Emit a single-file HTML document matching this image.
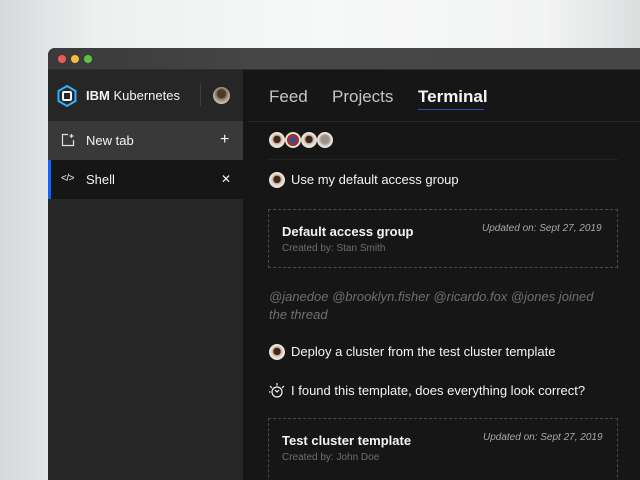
<!DOCTYPE html>
<html><head><style>
*{margin:0;padding:0;box-sizing:border-box}
body{width:640px;height:480px;overflow:hidden;background:linear-gradient(90deg,#d6d8da 0%,#eef0f0 15%,#f7f8f8 50%,#f3f4f4 85%,#dcdedf 100%);font-family:"Liberation Sans",sans-serif;position:relative}
.dot{position:absolute;top:7px;width:8px;height:8px;border-radius:50%}
.abs{position:absolute}
.t{color:#f4f4f4;position:absolute;white-space:nowrap}
.card{position:absolute;left:220px;width:350px;border:1px dashed #4a4a4a}
.av{position:absolute;width:16px;height:16px;border-radius:50%;border:2px solid #e8e2da;background:radial-gradient(circle at 50% 45%,#3a2a20 0 40%,#c9a080 42%,#e8e2da 70%)}
</style></head><body>
<div style="position:absolute;left:48px;top:48px;width:592px;height:432px;overflow:hidden;border-radius:7px 0 0 0;background:#161616">
 <div style="position:absolute;left:0;top:0;right:0;height:22px;background:linear-gradient(90deg,#3a3a3a,#474747 40%,#464646)"></div>
 <div style="position:absolute;left:0;top:21px;right:0;height:1px;background:#2e2e2e"></div>
 <div class="dot" style="left:10px;top:7px;background:#ed5c54"></div>
 <div class="dot" style="left:23px;top:7px;background:#f4bd3c"></div>
 <div class="dot" style="left:36px;top:7px;background:#5bc33f"></div>

 <div style="position:absolute;left:0;top:22px;width:195px;bottom:0;background:#262626"></div>
 <svg class="abs" style="left:8px;top:36px" width="22" height="24" viewBox="0 0 22 24"><polygon points="11,2 19.5,7 19.5,17 11,22 2.5,17 2.5,7" fill="none" stroke="#33b1ff" stroke-width="2"/><rect x="7" y="8" width="8" height="8" rx="1" fill="none" stroke="#f4f4f4" stroke-width="2"/></svg>
 <div class="t" style="left:38px;top:40px;font-size:13px"><b>IBM</b> Kubernetes</div>
 <div class="abs" style="left:152px;top:36px;width:1px;height:22px;background:#3d3d3d"></div>
 <div class="abs" style="left:165px;top:39px;width:17px;height:17px;border-radius:50%;background:radial-gradient(circle at 50% 40%,#4a3a2a 0 30%,#8a7a60 40%,#c9c0b0 70%)"></div>
 <div class="abs" style="left:0;top:73px;width:195px;height:39px;background:#393939"></div>
 <svg class="abs" style="left:13px;top:85px" width="14" height="14" viewBox="0 0 14 14" fill="none" stroke="#e0e0e0" stroke-width="1.2"><path d="M7 1.5H1.5V12.5H12.5V7"/><path d="M10.5 1V5M8.5 3H12.5"/></svg>
 <div class="t" style="left:38px;top:85px;font-size:13px">New tab</div>
 <div class="t" style="left:172px;top:83px;font-size:16px;font-weight:300">+</div>
 <div class="abs" style="left:0;top:112px;width:195px;height:39px;background:#161616"></div>
 <div class="abs" style="left:0;top:112px;width:3px;height:39px;background:#0f62fe"></div>
 <div class="t" style="left:13px;top:125px;font-size:10px;letter-spacing:-0.5px">&lt;/&gt;</div>
 <div class="t" style="left:38px;top:124px;font-size:13px">Shell</div>
 <div class="t" style="left:173px;top:124px;font-size:12px">✕</div>

 <div class="t" style="left:221px;top:39px;font-size:17px;color:#c6c6c6">Feed</div>
 <div class="t" style="left:284px;top:39px;font-size:17px;color:#c6c6c6">Projects</div>
 <div class="t" style="left:370px;top:39px;font-size:17px;font-weight:bold">Terminal</div>
 <div class="abs" style="left:370px;top:61px;width:66px;height:1px;background:#2454b8"></div>
 <div class="abs" style="left:200px;top:73px;right:0;height:1px;background:#2a2a2a"></div>
 <div class="av" style="left:221px;top:84px"></div>
 <div class="av" style="left:237px;top:84px;background:radial-gradient(circle,#3050a0 0 30%,#b03020 50%,#602010)"></div>
 <div class="av" style="left:253px;top:84px"></div>
 <div class="av" style="left:269px;top:84px;background:radial-gradient(circle at 50% 45%,#a09080 0 40%,#c0c8d0 70%)"></div>
 <div class="abs" style="left:220px;top:111px;width:350px;height:1px;background:#222"></div>

 <div class="av" style="left:221px;top:124px"></div>
 <div class="t" style="left:243px;top:124px;font-size:13px">Use my default access group</div>
 <div class="card" style="top:161px;height:59px"></div>
 <div class="t" style="left:234px;top:176px;font-size:13px;font-weight:bold">Default access group</div>
 <div class="t" style="left:234px;top:195px;font-size:10px;color:#6f6f6f">Created by: Stan Smith</div>
 <div class="t" style="left:434px;top:175px;font-size:10px;font-style:italic;color:#a8a8a8">Updated on: Sept 27, 2019</div>

 <div class="t" style="left:221px;top:240px;font-size:13px;font-style:italic;color:#6f6f6f;line-height:18px;white-space:normal;width:345px">@janedoe @brooklyn.fisher @ricardo.fox @jones joined the thread</div>

 <div class="av" style="left:221px;top:296px"></div>
 <div class="t" style="left:243px;top:296px;font-size:13px">Deploy a cluster from the test cluster template</div>
 <svg class="abs" style="left:220px;top:334px" width="17" height="17" viewBox="0 0 17 17" fill="none" stroke="#f4f4f4" stroke-width="1.2"><circle cx="9" cy="10" r="5"/><path d="M7 8l2 2 2-2M2 4l2 2M9 1v2.5M16 4l-2 2M1 10h1.5"/></svg>
 <div class="t" style="left:243px;top:335px;font-size:13px">I found this template, does everything look correct?</div>
 <div class="card" style="top:370px;height:80px"></div>
 <div class="t" style="left:234px;top:385px;font-size:13px;font-weight:bold">Test cluster template</div>
 <div class="t" style="left:234px;top:404px;font-size:10px;color:#6f6f6f">Created by: John Doe</div>
 <div class="t" style="left:435px;top:384px;font-size:10px;font-style:italic;color:#a8a8a8">Updated on: Sept 27, 2019</div>
</div>
</body></html>
